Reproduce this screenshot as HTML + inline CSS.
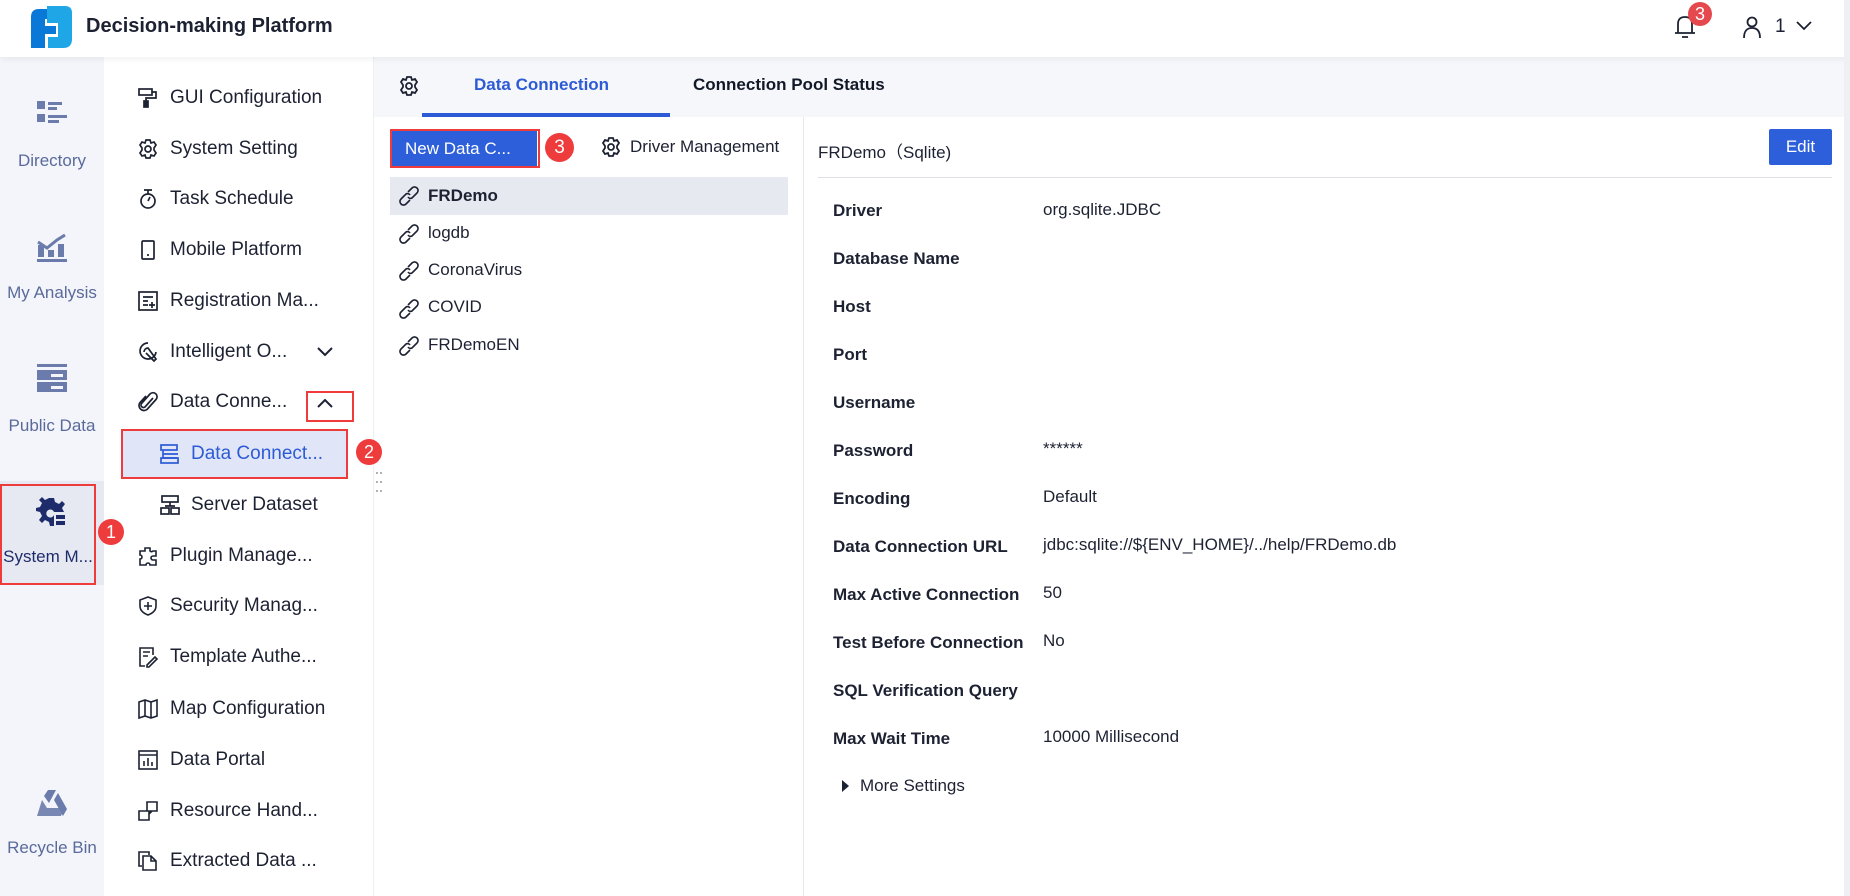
<!DOCTYPE html>
<html><head><meta charset="utf-8"><style>
*{box-sizing:border-box;margin:0;padding:0}
body{width:1850px;height:896px;overflow:hidden;background:#fff;font-family:"Liberation Sans",sans-serif;color:#1d2233;position:relative}
.abs{position:absolute}
.hdr{left:0;top:0;width:1850px;height:57px;background:#fff;box-shadow:0 2px 6px rgba(0,0,0,.06);z-index:2}
.rail{left:0;top:57px;width:104px;height:839px;background:#f3f5fa}
.rl{position:absolute;width:104px;text-align:center;font-size:17px;color:#5a6a9a}
.nav{left:104px;top:57px;width:270px;height:839px;background:#fff;border-right:1px solid #eceef3}
.ni{position:absolute;left:170px;font-size:19px;line-height:24px;white-space:nowrap;color:#1d2233}
.ic{position:absolute;width:20px;height:20px}
.tabs{left:374px;top:57px;width:1476px;height:60px;background:#f6f7fb}
.red{position:absolute;border:2.5px solid #ee3b3b}
.badge{position:absolute;width:26px;height:26px;border-radius:50%;background:#ee3b3b;color:#fff;font-size:18px;text-align:center;line-height:26px;z-index:5}
.li{position:absolute;left:428px;font-size:17px;line-height:20px}
.lab{position:absolute;left:833px;font-size:17px;font-weight:bold;line-height:20px}
.val{position:absolute;left:1043px;font-size:17px;line-height:20px}
svg{overflow:visible}
</style></head><body>

<div class="abs hdr">
  <svg class="abs" style="left:31px;top:6px" width="42" height="42" viewBox="0 0 42 42">
    <path d="M8 3 H22 V13 H14 V20 H25 V28 H14 V42 H0 V11 Q0 3 8 3Z" fill="#0a78d6"/>
    <path d="M16 0 H34 Q41 0 41 7 V33 Q41 42 32 42 H17 V31 H27 V17 H16Z" fill="#1fa6e6"/>
  </svg>
  <div class="abs" style="left:86px;top:15px;font-size:20px;font-weight:bold;color:#1d2233">Decision-making Platform</div>
  <svg class="abs" style="left:1674px;top:14px" width="22" height="24" viewBox="0 0 22 24" fill="none" stroke="#1d2233" stroke-width="1.8"><path d="M4 19 V10 Q4 3 11 3 Q18 3 18 10 V19 Z M1 19 H21 M8 23 H14"/></svg>
  <div class="badge" style="left:1688px;top:2px;width:24px;height:24px;line-height:24px;background:#e5484d">3</div>
  <svg class="abs" style="left:1742px;top:16px" width="20" height="22" viewBox="0 0 20 22" fill="none" stroke="#1d2233" stroke-width="1.8"><circle cx="10" cy="6" r="4.5"/><path d="M2 22 Q2 12 10 12 Q18 12 18 22"/></svg>
  <div class="abs" style="left:1775px;top:16px;font-size:19px">1</div>
  <svg class="abs" style="left:1796px;top:21px" width="16" height="10" viewBox="0 0 16 10" fill="none" stroke="#1d2233" stroke-width="1.8"><path d="M1 1 L8 8 L15 1"/></svg>
</div>
<div class="abs" style="left:1844px;top:0;width:6px;height:896px;background:#eef0f4;z-index:3"></div>

<div class="abs rail">
  <svg class="abs" style="left:37px;top:44px" width="30" height="26" viewBox="0 0 30 26" fill="#6b7bab"><rect x="0" y="0" width="8" height="8"/><rect x="11" y="1" width="14" height="3"/><rect x="11" y="6" width="9" height="3"/><rect x="0" y="13" width="8" height="8"/><rect x="11" y="14" width="19" height="3"/><rect x="11" y="19" width="11" height="3"/></svg>
  <div class="rl" style="top:94px">Directory</div>
  <svg class="abs" style="left:37px;top:175px" width="30" height="30" viewBox="0 0 30 30" fill="#6b7bab"><path d="M1 10 L10 16 L20 8 L28 3" stroke="#6b7bab" stroke-width="3" fill="none"/><rect x="1" y="13" width="6" height="12"/><rect x="11" y="18" width="6" height="7"/><rect x="21" y="12" width="6" height="13"/><rect x="0" y="27" width="30" height="3"/></svg>
  <div class="rl" style="top:226px">My Analysis</div>
  <svg class="abs" style="left:37px;top:307px" width="30" height="30" viewBox="0 0 30 30" fill="#6b7bab"><rect x="0" y="0" width="30" height="3"/><rect x="0" y="6" width="30" height="10"/><rect x="0" y="18" width="30" height="10"/><rect x="14" y="10" width="12" height="3" fill="#f3f5fa"/><rect x="14" y="22" width="12" height="3" fill="#f3f5fa"/></svg>
  <div class="rl" style="top:359px">Public Data</div>
  <div class="abs" style="left:0;top:424px;width:104px;height:104px;background:#e6e9f2"></div>
  <svg class="abs" style="left:37px;top:440px" width="30" height="30" viewBox="0 0 30 30"><path d="M13 1 H17 L18 5 L22 7 L25 4 L28 7 L25 11 L27 15 H17 A4 4 0 1 0 17 18 V29 H13 L12 25 L8 23 L5 26 L2 23 L5 19 L3 15 L-1 14 V11 L3 10 L5 6 L2 3 L5 0 L8 3 L12 1Z" fill="#1f2c6b"/><rect x="19" y="18" width="9" height="4" fill="#1f2c6b"/><rect x="19" y="24" width="9" height="4" fill="#1f2c6b"/></svg>
  <div class="rl" style="top:490px;color:#1f2c6b;white-space:nowrap;overflow:hidden;width:96px">System M...</div>
  <div class="red" style="left:0;top:427px;width:96px;height:101px"></div>
  <svg class="abs" style="left:37px;top:733px" width="30" height="28" viewBox="0 0 30 28" fill="#6b7bab"><path d="M11 0 H19 L12 13 L7 6Z"/><path d="M21 3 L30 19 L26 26 L17 10Z"/><path d="M5 10 L10 18 H28 L24 26 H0 Z" opacity=".9"/></svg>
  <div class="rl" style="top:781px">Recycle Bin</div>
</div>

<div class="abs nav"></div>
<div class="badge" style="left:98px;top:519px">1</div>
<svg class="ic" style="left:138px;top:88px" viewBox="0 0 20 20" fill="none" stroke="#1d2233" stroke-width="1.7"><rect x="1" y="1" width="13" height="6"/><path d="M14 4 H18 V10 H8 V13"/><rect x="6" y="13" width="4" height="6" fill="#1d2233"/></svg>
<div class="ni" style="top:86px">GUI Configuration</div>
<svg class="ic" style="left:138px;top:139px" viewBox="0 0 20 20" fill="none" stroke="#1d2233" stroke-width="1.7"><path d="M8 1 H12 L13 4 L16 3 L18 6 L16 9 V11 L18 14 L16 17 L13 16 L12 19 H8 L7 16 L4 17 L2 14 L4 11 V9 L2 6 L4 3 L7 4Z"/><circle cx="10" cy="10" r="3"/></svg>
<div class="ni" style="top:137px">System Setting</div>
<svg class="ic" style="left:138px;top:189px" viewBox="0 0 20 20" fill="none" stroke="#1d2233" stroke-width="1.7"><circle cx="10" cy="12" r="7"/><path d="M6 1 H14 M10 1 V5 M10 12 L12 8"/></svg>
<div class="ni" style="top:187px">Task Schedule</div>
<svg class="ic" style="left:138px;top:240px" viewBox="0 0 20 20" fill="none" stroke="#1d2233" stroke-width="1.7"><rect x="4" y="1" width="12" height="18" rx="1"/><path d="M9 15 H11"/></svg>
<div class="ni" style="top:238px">Mobile Platform</div>
<svg class="ic" style="left:138px;top:291px" viewBox="0 0 20 20" fill="none" stroke="#1d2233" stroke-width="1.7"><rect x="1" y="1" width="18" height="18"/><path d="M5 6 H15 M5 10 H10 M5 14 H10 M14 11 V17 M11 14 H17"/></svg>
<div class="ni" style="top:289px">Registration Ma...</div>
<svg class="ic" style="left:138px;top:342px" viewBox="0 0 20 20" fill="none" stroke="#1d2233" stroke-width="1.7"><path d="M10 1 A8 8 0 1 0 18 10 M6 10 A4 4 0 0 1 10 6 L18 17 L16 19 L8 11"/></svg>
<div class="ni" style="top:340px">Intelligent O...</div>
<svg class="abs" style="left:317px;top:347px" width="16" height="10" viewBox="0 0 16 10" fill="none" stroke="#1d2233" stroke-width="2"><path d="M1 1 L8 8 L15 1"/></svg>
<svg class="ic" style="left:138px;top:392px" viewBox="0 0 20 20" fill="none" stroke="#1d2233" stroke-width="1.7"><path d="M15 6 L7 15 A2.5 2.5 0 0 1 3.5 11.5 L12 2 A4 4 0 0 1 18 7.5 L9 17.5 A5 5 0 0 1 2 10.5 L8 4"/></svg>
<div class="ni" style="top:390px">Data Conne...</div>
<svg class="abs" style="left:317px;top:398px" width="16" height="10" viewBox="0 0 16 10" fill="none" stroke="#1d2233" stroke-width="2"><path d="M1 9 L8 2 L15 9"/></svg>
<div class="red" style="left:306px;top:391px;width:48px;height:31px"></div>

<div class="abs" style="left:123px;top:431px;width:223px;height:46px;background:#e0e6f7"></div>
<svg class="ic" style="left:160px;top:444px" viewBox="0 0 20 20" fill="none" stroke="#2d5bd6" stroke-width="1.7"><rect x="1" y="1" width="16" height="5"/><path d="M3 6 V10 H18 M3 10 V14 H17"/><rect x="1" y="14" width="17" height="5"/></svg>
<div class="ni" style="left:191px;top:442px;color:#2d5bd6">Data Connect...</div>
<div class="red" style="left:121px;top:429px;width:227px;height:50px"></div>
<div class="badge" style="left:356px;top:439px">2</div>
<svg class="abs" style="left:376px;top:472px" width="6" height="20" viewBox="0 0 6 20" fill="#999"><circle cx="1" cy="1" r="1"/><circle cx="5" cy="1" r="1"/><circle cx="1" cy="10" r="1"/><circle cx="5" cy="10" r="1"/><circle cx="1" cy="19" r="1"/><circle cx="5" cy="19" r="1"/></svg>
<svg class="ic" style="left:160px;top:495px" viewBox="0 0 20 20" fill="none" stroke="#1d2233" stroke-width="1.7"><rect x="2" y="1" width="16" height="6"/><path d="M10 7 V11 M5 11 H15"/><rect x="1" y="13" width="8" height="6"/><rect x="11" y="13" width="8" height="6"/></svg>
<div class="ni" style="left:191px;top:493px">Server Dataset</div>

<svg class="ic" style="left:138px;top:546px" viewBox="0 0 20 20" fill="none" stroke="#1d2233" stroke-width="1.6"><path d="M7 2 H12 V5 A2 2 0 0 0 15 5 H18 V10 H15 A2 2 0 0 0 15 14 H18 V19 H12 A2 2 0 0 0 8 19 H2 V13 A2 2 0 0 0 2 9 V5 H7Z"/></svg>
<div class="ni" style="top:544px">Plugin Manage...</div>
<svg class="ic" style="left:138px;top:596px" viewBox="0 0 20 20" fill="none" stroke="#1d2233" stroke-width="1.6"><path d="M10 1 L18 4 V10 Q18 16 10 19 Q2 16 2 10 V4Z M10 6 V14 M6 10 H14"/></svg>
<div class="ni" style="top:594px">Security Manag...</div>
<svg class="ic" style="left:138px;top:647px" viewBox="0 0 20 20" fill="none" stroke="#1d2233" stroke-width="1.6"><path d="M15 8 V1 H2 V19 H7 M5 5 H12 M5 9 H10 M9 18 L17 10 L19 12 L11 20 H9Z"/></svg>
<div class="ni" style="top:645px">Template Authe...</div>
<svg class="ic" style="left:138px;top:699px" viewBox="0 0 20 20" fill="none" stroke="#1d2233" stroke-width="1.6"><path d="M1 3 L7 1 L13 3 L19 1 V17 L13 19 L7 17 L1 19Z M7 1 V17 M13 3 V19"/></svg>
<div class="ni" style="top:697px">Map Configuration</div>
<svg class="ic" style="left:138px;top:750px" viewBox="0 0 20 20" fill="none" stroke="#1d2233" stroke-width="1.6"><rect x="1" y="1" width="18" height="18"/><path d="M1 5 H19 M6 16 V11 M10 16 V8 M14 16 V12"/></svg>
<div class="ni" style="top:748px">Data Portal</div>
<svg class="ic" style="left:138px;top:801px" viewBox="0 0 20 20" fill="none" stroke="#1d2233" stroke-width="1.6"><path d="M9 1 H19 V10 H11 V19 H1 V10 H9Z M9 1 V10 H11 M1 10 L9 10 M14 10 L11 13"/></svg>
<div class="ni" style="top:799px">Resource Hand...</div>
<svg class="ic" style="left:138px;top:851px" viewBox="0 0 20 20" fill="none" stroke="#1d2233" stroke-width="1.6"><path d="M4 15 H1 V1 H11 V4 M5 5 H13 L18 10 V19 H5Z M13 5 V10 H18"/></svg>
<div class="ni" style="top:849px">Extracted Data ...</div>

<div class="abs tabs"></div>
<svg class="ic" style="left:399px;top:76px" viewBox="0 0 20 20" fill="none" stroke="#1d2233" stroke-width="1.8"><path d="M8 1 H12 L13 4 L16 3 L18 6 L16 9 V11 L18 14 L16 17 L13 16 L12 19 H8 L7 16 L4 17 L2 14 L4 11 V9 L2 6 L4 3 L7 4Z"/><circle cx="10" cy="10" r="3"/></svg>
<div class="abs" style="left:474px;top:75px;font-size:17px;font-weight:bold;color:#2d5bd6">Data Connection</div>
<div class="abs" style="left:422px;top:113px;width:248px;height:4px;background:#2d5bd6"></div>
<div class="abs" style="left:693px;top:75px;font-size:17px;font-weight:bold;color:#111827">Connection Pool Status</div>

<div class="abs" style="left:803px;top:117px;width:1px;height:779px;background:#e5e7ec"></div>
<div class="abs" style="left:392px;top:131px;width:145px;height:35px;background:#2d5fdb;color:#fff;font-size:17px;line-height:35px;padding-left:13px">New Data C...</div>
<div class="red" style="left:390px;top:129px;width:150px;height:39px"></div>
<div class="badge" style="left:545px;top:133px;width:29px;height:29px;line-height:29px;font-size:19px">3</div>
<svg class="ic" style="left:601px;top:137px" viewBox="0 0 20 20" fill="none" stroke="#1d2233" stroke-width="1.8"><path d="M8 1 H12 L13 4 L16 3 L18 6 L16 9 V11 L18 14 L16 17 L13 16 L12 19 H8 L7 16 L4 17 L2 14 L4 11 V9 L2 6 L4 3 L7 4Z"/><circle cx="10" cy="10" r="3"/></svg>
<div class="abs" style="left:630px;top:137px;font-size:17px">Driver Management</div>

<div class="abs" style="left:390px;top:177px;width:398px;height:38px;background:#e6e9f0"></div>
<svg class="ic" style="left:399px;top:186px" viewBox="0 0 20 20" fill="none" stroke="#1d2233" stroke-width="1.6"><path d="M9 6 L13 2 A3 3 0 0 1 18 7 L13 12 A3 3 0 0 1 9 11 M11 14 L7 18 A3 3 0 0 1 2 13 L7 8 A3 3 0 0 1 11 9"/></svg>
<div class="li" style="top:186px;font-weight:bold">FRDemo</div>
<svg class="ic" style="left:399px;top:224px" viewBox="0 0 20 20" fill="none" stroke="#1d2233" stroke-width="1.6"><path d="M9 6 L13 2 A3 3 0 0 1 18 7 L13 12 A3 3 0 0 1 9 11 M11 14 L7 18 A3 3 0 0 1 2 13 L7 8 A3 3 0 0 1 11 9"/></svg>
<div class="li" style="top:223px">logdb</div>
<svg class="ic" style="left:399px;top:261px" viewBox="0 0 20 20" fill="none" stroke="#1d2233" stroke-width="1.6"><path d="M9 6 L13 2 A3 3 0 0 1 18 7 L13 12 A3 3 0 0 1 9 11 M11 14 L7 18 A3 3 0 0 1 2 13 L7 8 A3 3 0 0 1 11 9"/></svg>
<div class="li" style="top:260px">CoronaVirus</div>
<svg class="ic" style="left:399px;top:299px" viewBox="0 0 20 20" fill="none" stroke="#1d2233" stroke-width="1.6"><path d="M9 6 L13 2 A3 3 0 0 1 18 7 L13 12 A3 3 0 0 1 9 11 M11 14 L7 18 A3 3 0 0 1 2 13 L7 8 A3 3 0 0 1 11 9"/></svg>
<div class="li" style="top:297px">COVID</div>
<svg class="ic" style="left:399px;top:336px" viewBox="0 0 20 20" fill="none" stroke="#1d2233" stroke-width="1.6"><path d="M9 6 L13 2 A3 3 0 0 1 18 7 L13 12 A3 3 0 0 1 9 11 M11 14 L7 18 A3 3 0 0 1 2 13 L7 8 A3 3 0 0 1 11 9"/></svg>
<div class="li" style="top:335px">FRDemoEN</div>

<div class="abs" style="left:818px;top:138px;font-size:17px">FRDemo（Sqlite)</div>
<div class="abs" style="left:1769px;top:129px;width:63px;height:36px;background:#2d5fdb;border-radius:2px;color:#fff;font-size:17px;line-height:36px;text-align:center">Edit</div>
<div class="abs" style="left:818px;top:177px;width:1014px;height:1px;background:#dcdfe5"></div>

<div class="lab" style="top:201px">Driver</div><div class="val" style="top:200px">org.sqlite.JDBC</div>
<div class="lab" style="top:249px">Database Name</div>
<div class="lab" style="top:297px">Host</div>
<div class="lab" style="top:345px">Port</div>
<div class="lab" style="top:393px">Username</div>
<div class="lab" style="top:441px">Password</div><div class="val" style="top:439px">******</div>
<div class="lab" style="top:489px">Encoding</div><div class="val" style="top:487px">Default</div>
<div class="lab" style="top:537px">Data Connection URL</div><div class="val" style="top:535px">jdbc:sqlite://${ENV_HOME}/../help/FRDemo.db</div>
<div class="lab" style="top:585px">Max Active Connection</div><div class="val" style="top:583px">50</div>
<div class="lab" style="top:633px">Test Before Connection</div><div class="val" style="top:631px">No</div>
<div class="lab" style="top:681px">SQL Verification Query</div>
<div class="lab" style="top:729px">Max Wait Time</div><div class="val" style="top:727px">10000 Millisecond</div>
<svg class="abs" style="left:842px;top:780px" width="7" height="12" viewBox="0 0 7 12"><path d="M0 0 L7 6 L0 12Z" fill="#1d2233"/></svg>
<div class="abs" style="left:860px;top:776px;font-size:17px">More Settings</div>
</body></html>
